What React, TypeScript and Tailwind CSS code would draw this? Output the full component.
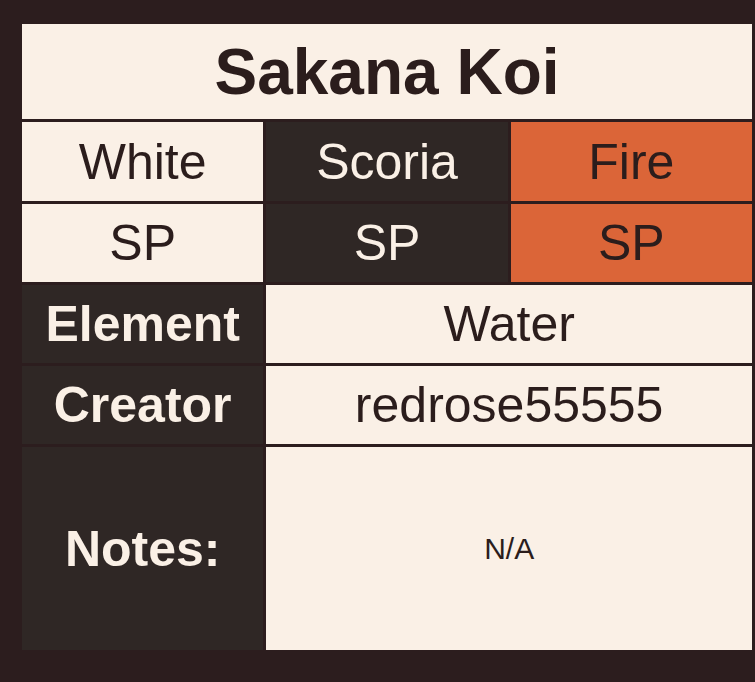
const cream = 'bg-[#faf0e6] text-[#2b1d1c]';
const dark = 'bg-[#2f2725] text-[#faf0e6]';
const orange = 'bg-[#db6538] text-[#2b1d1c]';

function Cell({ className, children }: { className: string; children: React.ReactNode }) {
  return (
    <div className={`flex items-center justify-center leading-none ${className}`}>
      {children}
    </div>
  );
}

export default function App() {
  return (
    <div
      className="min-h-[682px] w-full bg-[#2c1d1e] pl-[22px] pr-[3px] pt-[24px] pb-[31px]"
      style={{ fontFamily: '"Liberation Sans", Arial, sans-serif' }}
    >
      <div className="grid grid-cols-3 gap-[3px]">
        <Cell className={`${cream} col-span-3 h-[95px] text-[64px] font-bold`}>Sakana Koi</Cell>

        <Cell className={`${cream} h-[79px] text-[50px]`}>White</Cell>
        <Cell className={`${dark} h-[79px] text-[50px]`}>Scoria</Cell>
        <Cell className={`${orange} h-[79px] text-[50px]`}>Fire</Cell>

        <Cell className={`${cream} h-[78px] text-[50px]`}>SP</Cell>
        <Cell className={`${dark} h-[78px] text-[50px]`}>SP</Cell>
        <Cell className={`${orange} h-[78px] text-[50px]`}>SP</Cell>

        <Cell className={`${dark} h-[78px] text-[50px] font-bold`}>Element</Cell>
        <Cell className={`${cream} col-span-2 h-[78px] text-[50px]`}>Water</Cell>

        <Cell className={`${dark} h-[78px] text-[50px] font-bold`}>Creator</Cell>
        <Cell className={`${cream} col-span-2 h-[78px] text-[50px]`}>redrose55555</Cell>

        <Cell className={`${dark} h-[203px] text-[50px] font-bold`}>Notes:</Cell>
        <Cell className={`${cream} col-span-2 h-[203px] text-[30px]`}>N/A</Cell>
      </div>
    </div>
  );
}
